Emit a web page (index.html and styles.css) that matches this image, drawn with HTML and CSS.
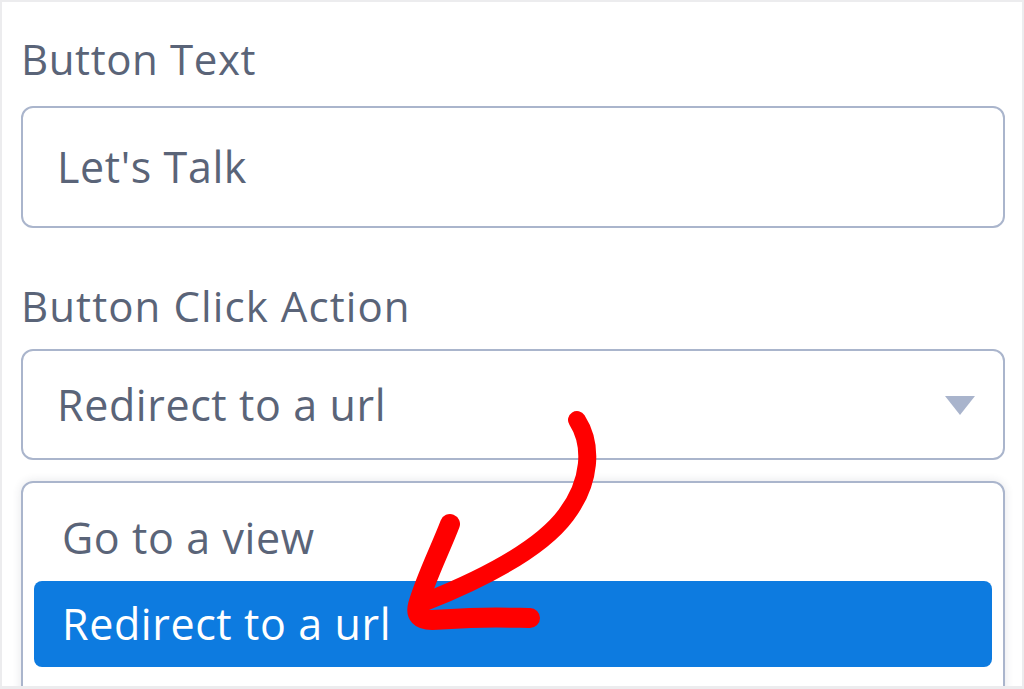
FILE: index.html
```html
<!DOCTYPE html>
<html lang="en">
<head>
<meta charset="utf-8">
<title>Button settings</title>
<link rel="stylesheet" href="styles.css">
</head>
<body>
<div class="panel">
  <div class="label label-first">Button Text</div>
  <div class="field input"><span class="value">Let's Talk</span></div>
  <div class="label label-second">Button Click Action</div>
  <div class="field select">
    <span class="value">Redirect to a url</span>
    <span class="caret"></span>
  </div>
  <div class="list">
    <div class="option">Go to a view</div>
    <div class="option selected">Redirect to a url</div>
  </div>
</div>
<svg class="arrow" viewBox="0 0 1024 689" width="1024" height="689" aria-hidden="true">
  <path d="M577 420 C 593 445, 591 482, 566 515 C 540 550, 480 580, 425 602" />
  <path d="M450 524 C 440 550, 425 580, 418 605 Q 414 620, 432 620 L 470 618 C 500 617, 520 618, 530 618" class="head" />
</svg>
</body>
</html>
```

FILE: styles.css
```css
html, body {
  margin: 0;
  padding: 0;
}

body {
  width: 1024px;
  height: 689px;
  background: #ececee;
  position: relative;
  overflow: hidden;
  font-family: "Open Sans", Lato, sans-serif;
  color: #5a6478;
  letter-spacing: 0.6px;
}

.panel {
  margin: 2px 2px 0 2px;
  height: 684px;
  background: #ffffff;
  box-sizing: border-box;
  padding: 31.6px 17px 0 19px;
  overflow: hidden;
  display: flex;
  flex-direction: column;
}

.label {
  font-size: 42px;
  line-height: 1.2;
}

.label-second {
  margin-top: 52.6px;
  letter-spacing: 1.1px;
}

.field {
  box-sizing: border-box;
  border: 2px solid #aab5cc;
  border-radius: 12px;
  display: flex;
  align-items: center;
  justify-content: space-between;
  padding: 0 28px 0 34px;
  flex: none;
}

.input {
  margin-top: 22px;
  height: 122px;
  font-size: 43px;
}

.select {
  margin-top: 18px;
  height: 111px;
  font-size: 43px;
}

.value {
  line-height: 1.2;
}

.caret {
  width: 0;
  height: 0;
  border-left: 15px solid transparent;
  border-right: 15px solid transparent;
  border-top: 19px solid #a9b4cc;
  margin-top: 2px;
}

.list {
  margin-top: 21px;
  flex: none;
  height: 260px;
  box-sizing: border-box;
  border: 2px solid #aab5cc;
  border-radius: 12px;
  padding: 12px 11px 0 11px;
  box-shadow: 0 0 10px rgba(40, 50, 70, 0.12);
  font-size: 43px;
}

.option {
  height: 86px;
  display: flex;
  align-items: center;
  padding-left: 28px;
  line-height: 1.2;
  border-radius: 8px;
}

.option.selected {
  background: #0d7be0;
  color: #ffffff;
}

.arrow {
  position: absolute;
  left: 0;
  top: 0;
  pointer-events: none;
}

.arrow path {
  fill: none;
  stroke: #ff0000;
  stroke-width: 18;
  stroke-linecap: round;
  stroke-linejoin: round;
}

.arrow path.head {
  stroke-width: 20;
}
```
